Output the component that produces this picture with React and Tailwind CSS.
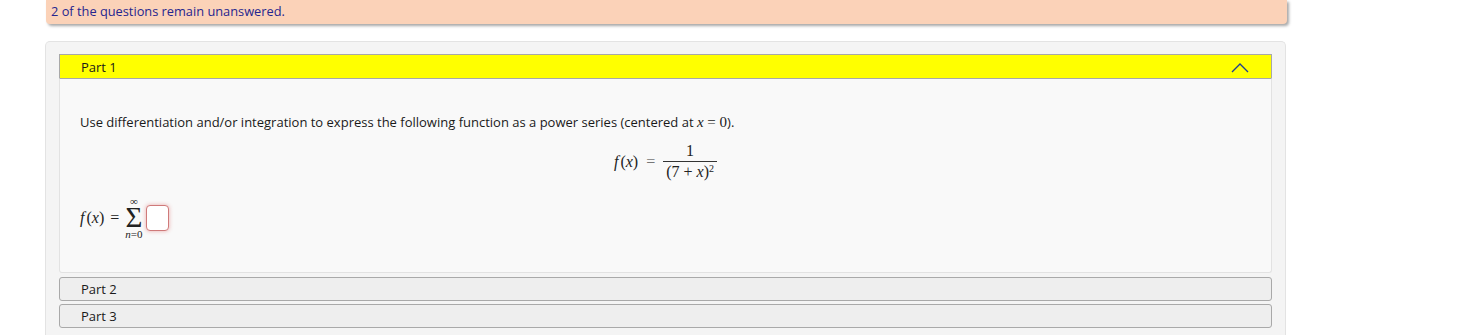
import React from 'react';

const ui = { fontFamily: '"Open Sans", "Noto Sans", sans-serif' };
const tex = { fontFamily: '"Liberation Serif", "DejaVu Serif", serif' };

const Chevron = () => (
  <svg width="18" height="10" viewBox="0 0 18 10" className="mr-[22px]">
    <polyline points="1,9 9,1 17,9" fill="none" stroke="#1f3f8f" strokeWidth="1.3" />
  </svg>
);

const PartHeader = ({ label, active, open }) => (
  <div
    className={
      active
        ? 'flex h-6 items-center justify-between border-t border-x border-[#a8a8a8] bg-[#ffff00] pl-[21px] pt-[2px]'
        : 'flex h-6 items-center justify-between rounded-[3px] border border-[#a9a9a9] bg-[#eeeeee] pl-[21px] pt-[2px]'
    }
  >
    <span className="text-[13px] text-[#1a1a1a]">{label}</span>
    {open && <Chevron />}
  </div>
);

const Fx = () => (
  <span className="italic">
    f<span className="not-italic ml-[2px]">(</span>x<span className="not-italic">)</span>
  </span>
);

export default function App() {
  return (
    <div className="min-h-[335px] w-full bg-white" style={ui}>
      <div className="ml-[46px] w-[1241px] rounded-b-[4px] bg-[#fbd2b8] pl-[5px] h-6 flex items-center shadow-[2px_2px_3px_rgba(0,0,0,0.35)]">
        <span className="text-[12.8px] text-[#25258f]">2 of the questions remain unanswered.</span>
      </div>

      <div className="ml-[45px] mt-[17px] w-[1241px] rounded-t-[5px] border-t border-x border-[#e3e3e3] bg-[#f4f4f4] px-[13px] pt-[12px] pb-2">
        <PartHeader label="Part 1" active open />
        <div className="h-[195px] border-t border-[#a8a8a8] border-x border-b border-x-[#e2e2e2] border-b-[#e2e2e2] bg-[#f9f9f9] px-[20px] pt-[34px] rounded-b-[3px]">
          <p className="text-[13px] text-[#1a1a1a] leading-[18px]">
            Use differentiation and/or integration to express the following function as a power series (centered at{' '}
            <span style={tex} className="italic text-[15px]">x</span>
            <span style={tex} className="text-[15px]"> = 0</span>).
          </p>

          <div className="mt-[11px] flex items-center justify-center text-[16px] text-[#222]" style={tex}>
            <Fx />
            <span className="mx-[8px] text-[#777]">=</span>
            <div className="flex flex-col items-center">
              <span className="leading-[18px] px-1 pb-[1px]">1</span>
              <span className="border-t border-[#333] px-[3px] pt-[1px] leading-[18px]">
                (7 + <span className="italic">x</span>)<sup className="text-[10px]">2</sup>
              </span>
            </div>
          </div>

          <div className="mt-[15px] flex items-center text-[16px] text-[#222]" style={tex}>
            <Fx />
            <span className="mx-[6px]">=</span>
            <div className="flex flex-col items-center">
              <span className="text-[11px] leading-[10px]">∞</span>
              <span className="text-[29px] leading-[22px]">Σ</span>
              <span className="text-[11px] italic leading-[12px]">
                n<span className="not-italic">=0</span>
              </span>
            </div>
            <div className="ml-[4px] h-[26px] w-[23px] rounded-[4px] border border-[#cf7a7a] bg-white shadow-[0_0_4px_rgba(220,80,80,0.45)]" />
          </div>
        </div>

        <div className="mt-[4px] flex flex-col gap-[3px]">
          <PartHeader label="Part 2" />
          <PartHeader label="Part 3" />
        </div>
      </div>
    </div>
  );
}
